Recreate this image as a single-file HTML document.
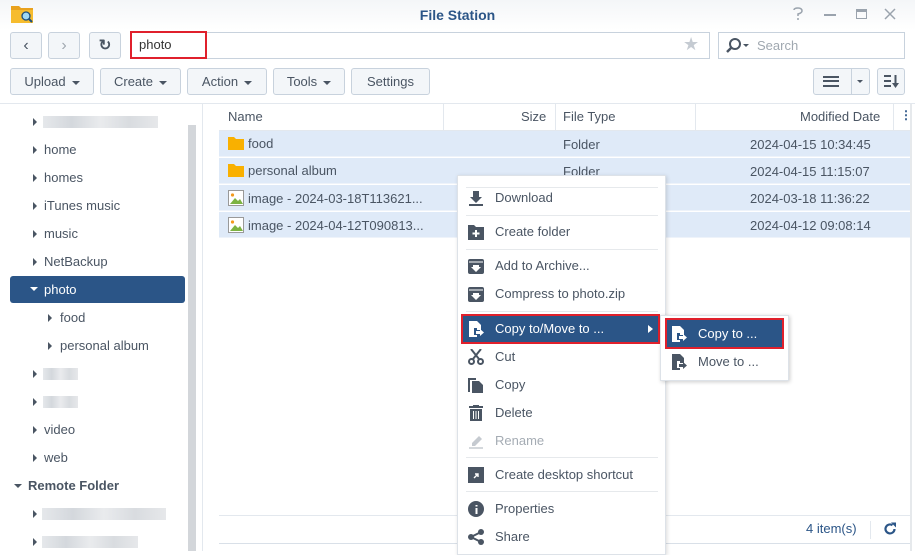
<!DOCTYPE html>
<html><head><meta charset="utf-8"><style>
*{box-sizing:border-box;margin:0;padding:0}
body{width:915px;height:551px;overflow:hidden;background:#fff;font-family:"Liberation Sans",sans-serif;font-size:13px;color:#4a5563;position:relative}
.a{position:absolute}
.btn{position:absolute;height:27px;border:1px solid #c8d2dd;border-radius:3px;background:#f3f6f9;color:#4a5563;font-size:13px;line-height:25px;text-align:center}
.car{display:inline-block;width:0;height:0;border-left:4px solid transparent;border-right:4px solid transparent;border-top:4px solid #4a5563;vertical-align:middle;margin-left:6px}
.tri{position:absolute;width:0;height:0;border-top:4px solid transparent;border-bottom:4px solid transparent;border-left:4px solid #4a5563}
.tree{position:absolute;left:44px;font-size:13px;color:#4a5563}
.blur{position:absolute;height:12px;background:linear-gradient(90deg,#dfe2e6,#c9ced4,#e4e6e9,#cfd3d8,#e0e2e5);opacity:.8}
.row{position:absolute;left:219px;width:691px;height:26px;background:#dfeaf8;border-bottom:1px solid #eef3fa;line-height:26px}
.mi{position:absolute;left:0;width:208px;height:28px;line-height:28px;padding-left:37px;font-size:13px;color:#4a5563}
.ic{position:absolute;left:10px;top:6px;width:16px;height:16px}
.sep{position:absolute;left:8px;width:192px;height:1px;background:#e6e9ec}
</style></head><body>
<div class="a" style="left:0;top:0;width:915px;height:30px;background:linear-gradient(#f4f6f8,#fff)"></div>
<svg class="a" style="left:10px;top:3px" width="25" height="22" viewBox="0 0 25 22"><path d="M1 3h8l2 2h12v15H1z" fill="#e9a21e"/><path d="M1 7h22v13H1z" fill="#f6bc2e"/><circle cx="16" cy="13" r="4" fill="#9fd8f5" stroke="#1d4f7c" stroke-width="1.3"/><path d="M19 16l3 3" stroke="#1d4f7c" stroke-width="2"/></svg>
<div class="a" style="left:0;width:915px;top:7px;text-align:center;font-weight:bold;font-size:14px;color:#2b5587">File Station</div>
<svg class="a" style="left:792px;top:7px" width="12" height="14"><path d="M2 3Q2 1 6 1Q10 1 10 4Q10 6 6 7V9M6 11v2" stroke="#9aa3ad" stroke-width="1.5" fill="none"/></svg>
<div class="a" style="left:824px;top:14px;width:12px;height:2px;background:#9aa3ad"></div>
<div class="a" style="left:856px;top:9px;width:11px;height:10px;border:1px solid #9aa3ad;border-top-width:3px"></div>
<svg class="a" style="left:884px;top:8px" width="12" height="12"><path d="M1 1l10 10M11 1L1 11" stroke="#9aa3ad" stroke-width="1.5"/></svg>
<div class="btn" style="left:10px;top:32px;width:32px;font-size:16px">‹</div>
<div class="btn" style="left:48px;top:32px;width:32px;font-size:16px;color:#a0a8b0">›</div>
<div class="btn" style="left:89px;top:32px;width:32px;font-weight:bold;font-size:15px">↻</div>
<div class="a" style="left:130px;top:32px;width:580px;height:27px;border:1px solid #c8d2dd;background:#fff"></div>
<div class="a" style="left:130px;top:31px;width:77px;height:28px;border:2px solid #e0202c;padding-left:7px;line-height:24px;color:#333">photo</div>
<div class="a" style="left:683px;top:34px;font-size:18px;color:#c5cbd2">★</div>
<div class="a" style="left:718px;top:32px;width:187px;height:27px;border:1px solid #c8d2dd;background:#fff"></div>
<svg class="a" style="left:726px;top:37px" width="16" height="16"><circle cx="9" cy="7" r="5" fill="none" stroke="#4a5563" stroke-width="2"/><path d="M5 11l-4 4" stroke="#4a5563" stroke-width="2.5"/></svg>
<div class="a" style="left:743px;top:44px;border-left:3px solid transparent;border-right:3px solid transparent;border-top:3px solid #4a5563"></div>
<div class="a" style="left:757px;top:38px;color:#a0a8b0">Search</div>
<div class="btn" style="left:10px;top:68px;width:84px">Upload<span class="car"></span></div>
<div class="btn" style="left:100px;top:68px;width:81px">Create<span class="car"></span></div>
<div class="btn" style="left:187px;top:68px;width:80px">Action<span class="car"></span></div>
<div class="btn" style="left:273px;top:68px;width:72px">Tools<span class="car"></span></div>
<div class="btn" style="left:351px;top:68px;width:79px">Settings</div>
<div class="btn" style="left:813px;top:68px;width:57px"></div>
<div class="a" style="left:851px;top:69px;width:1px;height:25px;background:#c8d2dd"></div>
<div class="a" style="left:823px;top:76px;width:16px;height:11px;border-top:2px solid #4a5563;border-bottom:2px solid #4a5563"></div>
<div class="a" style="left:823px;top:80px;width:16px;height:2px;background:#4a5563"></div>
<div class="a" style="left:857px;top:80px;border-left:3px solid transparent;border-right:3px solid transparent;border-top:3px solid #4a5563"></div>
<div class="btn" style="left:877px;top:68px;width:28px"></div>
<svg class="a" style="left:884px;top:74px" width="16" height="15"><path d="M0 2h7M0 7h7M0 12h7" stroke="#4a5563" stroke-width="2"/><path d="M11.5 1v9" stroke="#4a5563" stroke-width="2"/><path d="M8 9h7l-3.5 5z" fill="#4a5563"/></svg>
<div class="a" style="left:0;top:103px;width:915px;height:1px;background:#e3e8ee"></div>
<div class="tri" style="left:33px;top:118px"></div><div class="blur" style="left:43px;top:116px;width:115px"></div>
<div class="tri" style="left:33px;top:146px"></div><div class="tree" style="top:142px">home</div>
<div class="tri" style="left:33px;top:174px"></div><div class="tree" style="top:170px">homes</div>
<div class="tri" style="left:33px;top:202px"></div><div class="tree" style="top:198px">iTunes music</div>
<div class="tri" style="left:33px;top:230px"></div><div class="tree" style="top:226px">music</div>
<div class="tri" style="left:33px;top:258px"></div><div class="tree" style="top:254px">NetBackup</div>
<div class="a" style="left:10px;top:276px;width:175px;height:27px;background:#2b5587;border-radius:3px"></div>
<div class="a" style="left:30px;top:287px;border-left:4px solid transparent;border-right:4px solid transparent;border-top:4px solid #fff"></div>
<div class="tree" style="top:282px;color:#fff">photo</div>
<div class="tri" style="left:48px;top:314px"></div><div class="tree" style="left:60px;top:310px">food</div>
<div class="tri" style="left:48px;top:342px"></div><div class="tree" style="left:60px;top:338px">personal album</div>
<div class="tri" style="left:33px;top:370px"></div><div class="blur" style="left:43px;top:368px;width:35px"></div>
<div class="tri" style="left:33px;top:398px"></div><div class="blur" style="left:43px;top:396px;width:35px"></div>
<div class="tri" style="left:33px;top:426px"></div><div class="tree" style="top:422px">video</div>
<div class="tri" style="left:33px;top:454px"></div><div class="tree" style="top:450px">web</div>
<div class="a" style="left:14px;top:484px;border-left:4px solid transparent;border-right:4px solid transparent;border-top:4px solid #4a5563"></div>
<div class="tree" style="left:28px;top:478px;font-weight:bold">Remote Folder</div>
<div class="tri" style="left:33px;top:510px"></div><div class="blur" style="left:42px;top:508px;width:124px"></div>
<div class="tri" style="left:33px;top:538px"></div><div class="blur" style="left:42px;top:536px;width:96px"></div>
<div class="a" style="left:188px;top:125px;width:8px;height:426px;background:#d3d6da"></div>
<div class="a" style="left:202px;top:104px;width:1px;height:447px;background:#e3e8ee"></div>
<div class="a" style="left:219px;top:104px;width:691px;height:27px;border-bottom:1px solid #e3e8ee"></div>
<div class="a" style="left:228px;top:109px">Name</div>
<div class="a" style="left:443px;top:104px;width:1px;height:26px;background:#e3e8ee"></div>
<div class="a" style="left:521px;top:109px">Size</div>
<div class="a" style="left:555px;top:104px;width:1px;height:26px;background:#e3e8ee"></div>
<div class="a" style="left:563px;top:109px">File Type</div>
<div class="a" style="left:695px;top:104px;width:1px;height:26px;background:#e3e8ee"></div>
<div class="a" style="left:800px;top:109px">Modified Date</div>
<div class="a" style="left:893px;top:104px;width:1px;height:26px;background:#e3e8ee"></div>
<div class="a" style="left:900px;top:108px;font-weight:bold;font-size:12px;color:#2b5587">⋮</div>
<div class="row" style="top:131px"></div><div class="row" style="top:158px"></div><div class="row" style="top:185px"></div><div class="row" style="top:212px"></div>
<svg class="a" style="left:228px;top:136px" width="16" height="14"><path d="M0 1h6l2 2h8v11H0z" fill="#f9b000"/></svg>
<div class="a" style="left:248px;top:136px">food</div><div class="a" style="left:563px;top:137px">Folder</div><div class="a" style="left:750px;top:137px">2024-04-15 10:34:45</div>
<svg class="a" style="left:228px;top:163px" width="16" height="14"><path d="M0 1h6l2 2h8v11H0z" fill="#f9b000"/></svg>
<div class="a" style="left:248px;top:163px">personal album</div><div class="a" style="left:563px;top:164px">Folder</div><div class="a" style="left:750px;top:164px">2024-04-15 11:15:07</div>
<svg class="a" style="left:228px;top:190px" width="16" height="16"><rect x=".5" y=".5" width="15" height="15" fill="#fff" stroke="#999"/><circle cx="4.5" cy="5" r="1.6" fill="#f39a1e"/><path d="M2 14l5-6 3 3 2-2 3 5z" fill="#7cb342"/></svg>
<div class="a" style="left:248px;top:191px">image - 2024-03-18T113621...</div><div class="a" style="left:750px;top:191px">2024-03-18 11:36:22</div>
<svg class="a" style="left:228px;top:217px" width="16" height="16"><rect x=".5" y=".5" width="15" height="15" fill="#fff" stroke="#999"/><circle cx="4.5" cy="5" r="1.6" fill="#f39a1e"/><path d="M2 14l5-6 3 3 2-2 3 5z" fill="#7cb342"/></svg>
<div class="a" style="left:248px;top:218px">image - 2024-04-12T090813...</div><div class="a" style="left:750px;top:218px">2024-04-12 09:08:14</div>
<div class="a" style="left:910px;top:104px;width:2px;height:447px;background:#e6e9ec"></div>
<div class="a" style="left:219px;top:515px;width:691px;height:1px;background:#e3e8ee"></div>
<div class="a" style="left:219px;top:543px;width:691px;height:1px;background:#d9e0e8"></div>
<div class="a" style="left:806px;top:521px;color:#2b5587">4 item(s)</div>
<div class="a" style="left:870px;top:521px;width:1px;height:18px;background:#e3e8ee"></div>
<svg class="a" style="left:883px;top:522px" width="14" height="14"><path d="M11.5 7A4.5 4.5 0 1 1 9.5 3.2" stroke="#2b5587" stroke-width="2.2" fill="none"/><path d="M8 0.5h5v5z" fill="#2b5587"/></svg>
<div class="a" style="left:457px;top:175px;width:209px;height:380px;background:#fff;border:1px solid #dde2e8;box-shadow:1px 1px 4px rgba(0,0,0,.15)">
<div class="sep" style="top:11px"></div>
<div class="mi" style="top:8px"><svg class="ic" viewBox="0 0 16 16"><path d="M5 1h6v6h3l-6 6-6-6h3z M1 14h14v2H1z" fill="#4a5563"/></svg>Download</div>
<div class="sep" style="top:39px"></div>
<div class="mi" style="top:42px"><svg class="ic" viewBox="0 0 16 16"><path d="M0 1h6l2 2h8v13H0z" fill="#4a5563"/><path d="M8 6v7M4.5 9.5h7" stroke="#fff" stroke-width="2"/></svg>Create folder</div>
<div class="sep" style="top:73px"></div>
<div class="mi" style="top:76px"><svg class="ic" viewBox="0 0 16 16"><rect x="0" y="1" width="16" height="15" rx="2" fill="#4a5563"/><path d="M1 4h14" stroke="#fff"/><path d="M5 7h6v2h2l-5 5-5-5h2z" fill="#fff"/></svg>Add to Archive...</div>
<div class="mi" style="top:104px"><svg class="ic" viewBox="0 0 16 16"><rect x="0" y="1" width="16" height="15" rx="2" fill="#4a5563"/><path d="M1 4h14" stroke="#fff"/><path d="M5 7h6v2h2l-5 5-5-5h2z" fill="#fff"/></svg>Compress to photo.zip</div>
<div class="sep" style="top:135px"></div>
<div class="a" style="left:3px;top:138px;width:199px;height:30px;background:#2b5587;border:2px solid #e0202c"></div>
<div class="mi" style="top:139px;color:#fff"><svg class="ic" viewBox="0 0 16 16"><path d="M1 0h8l4 4v5H9v-2H6v7h3v2H1z" fill="#fff"/><path d="M8 10h4V8l4 3.5-4 3.5v-2H8z" fill="#fff"/></svg>Copy to/Move to ...</div>
<div class="a" style="left:190px;top:149px;border-top:4px solid transparent;border-bottom:4px solid transparent;border-left:5px solid #fff"></div>
<div class="mi" style="top:167px"><svg class="ic" viewBox="0 0 16 16"><circle cx="3.5" cy="12.5" r="2.5" fill="none" stroke="#4a5563" stroke-width="2"/><circle cx="12.5" cy="12.5" r="2.5" fill="none" stroke="#4a5563" stroke-width="2"/><path d="M5 10L13 0M11 10L3 0" stroke="#4a5563" stroke-width="2"/></svg>Cut</div>
<div class="mi" style="top:195px"><svg class="ic" viewBox="0 0 16 16"><path d="M0 1h8v2H2v12H0z" fill="#4a5563"/><path d="M4 4h7l4 4v8H4z" fill="#4a5563"/></svg>Copy</div>
<div class="mi" style="top:223px"><svg class="ic" viewBox="0 0 16 16"><path d="M1 1h14v2H1zM5 0h6v1H5z" fill="#4a5563"/><path d="M2 4h12v12H2z" fill="#4a5563"/><path d="M5.5 6v8M8 6v8M10.5 6v8" stroke="#fff"/></svg>Delete</div>
<div class="mi" style="top:251px;color:#a5acb4"><svg class="ic" viewBox="0 0 16 16"><path d="M4 10l7-7 3 3-7 7H4z" fill="#c5cad0"/><path d="M1 15h14" stroke="#c5cad0" stroke-width="1.5"/></svg>Rename</div>
<div class="sep" style="top:281px"></div>
<div class="mi" style="top:285px"><svg class="ic" viewBox="0 0 16 16"><rect width="16" height="16" fill="#4a5563"/><path d="M6 11l4-4M7 7h3v3" stroke="#fff" stroke-width="1.4" fill="none"/></svg>Create desktop shortcut</div>
<div class="sep" style="top:315px"></div>
<div class="mi" style="top:319px"><svg class="ic" viewBox="0 0 16 16"><circle cx="8" cy="8" r="8" fill="#4a5563"/><path d="M8.5 7v6M8.5 4v1.5" stroke="#fff" stroke-width="2"/></svg>Properties</div>
<div class="mi" style="top:347px"><svg class="ic" viewBox="0 0 16 16"><circle cx="3" cy="8" r="3" fill="#4a5563"/><circle cx="13" cy="3" r="3" fill="#4a5563"/><circle cx="13" cy="13" r="3" fill="#4a5563"/><path d="M3 8L13 3M3 8l10 5" stroke="#4a5563" stroke-width="2"/></svg>Share</div>
</div>
<div class="a" style="left:660px;top:315px;width:129px;height:66px;background:#fff;border:1px solid #dde2e8;box-shadow:1px 1px 4px rgba(0,0,0,.2)">
<div class="a" style="left:4px;top:2px;width:119px;height:31px;background:#2b5587;border:2px solid #e0202c"></div>
<div class="mi" style="top:4px;width:129px;color:#fff"><svg class="ic" viewBox="0 0 16 16"><path d="M1 0h8l4 4v5H9v-2H6v7h3v2H1z" fill="#fff"/><path d="M8 10h4V8l4 3.5-4 3.5v-2H8z" fill="#fff"/></svg>Copy to ...</div>
<div class="mi" style="top:32px;width:129px"><svg class="ic" viewBox="0 0 16 16"><path d="M1 0h8l4 4v5H9v-2H6v7h3v2H1z" fill="#4a5563"/><path d="M8 10h4V8l4 3.5-4 3.5v-2H8z" fill="#4a5563"/></svg>Move to ...</div>
</div>
</body></html>
